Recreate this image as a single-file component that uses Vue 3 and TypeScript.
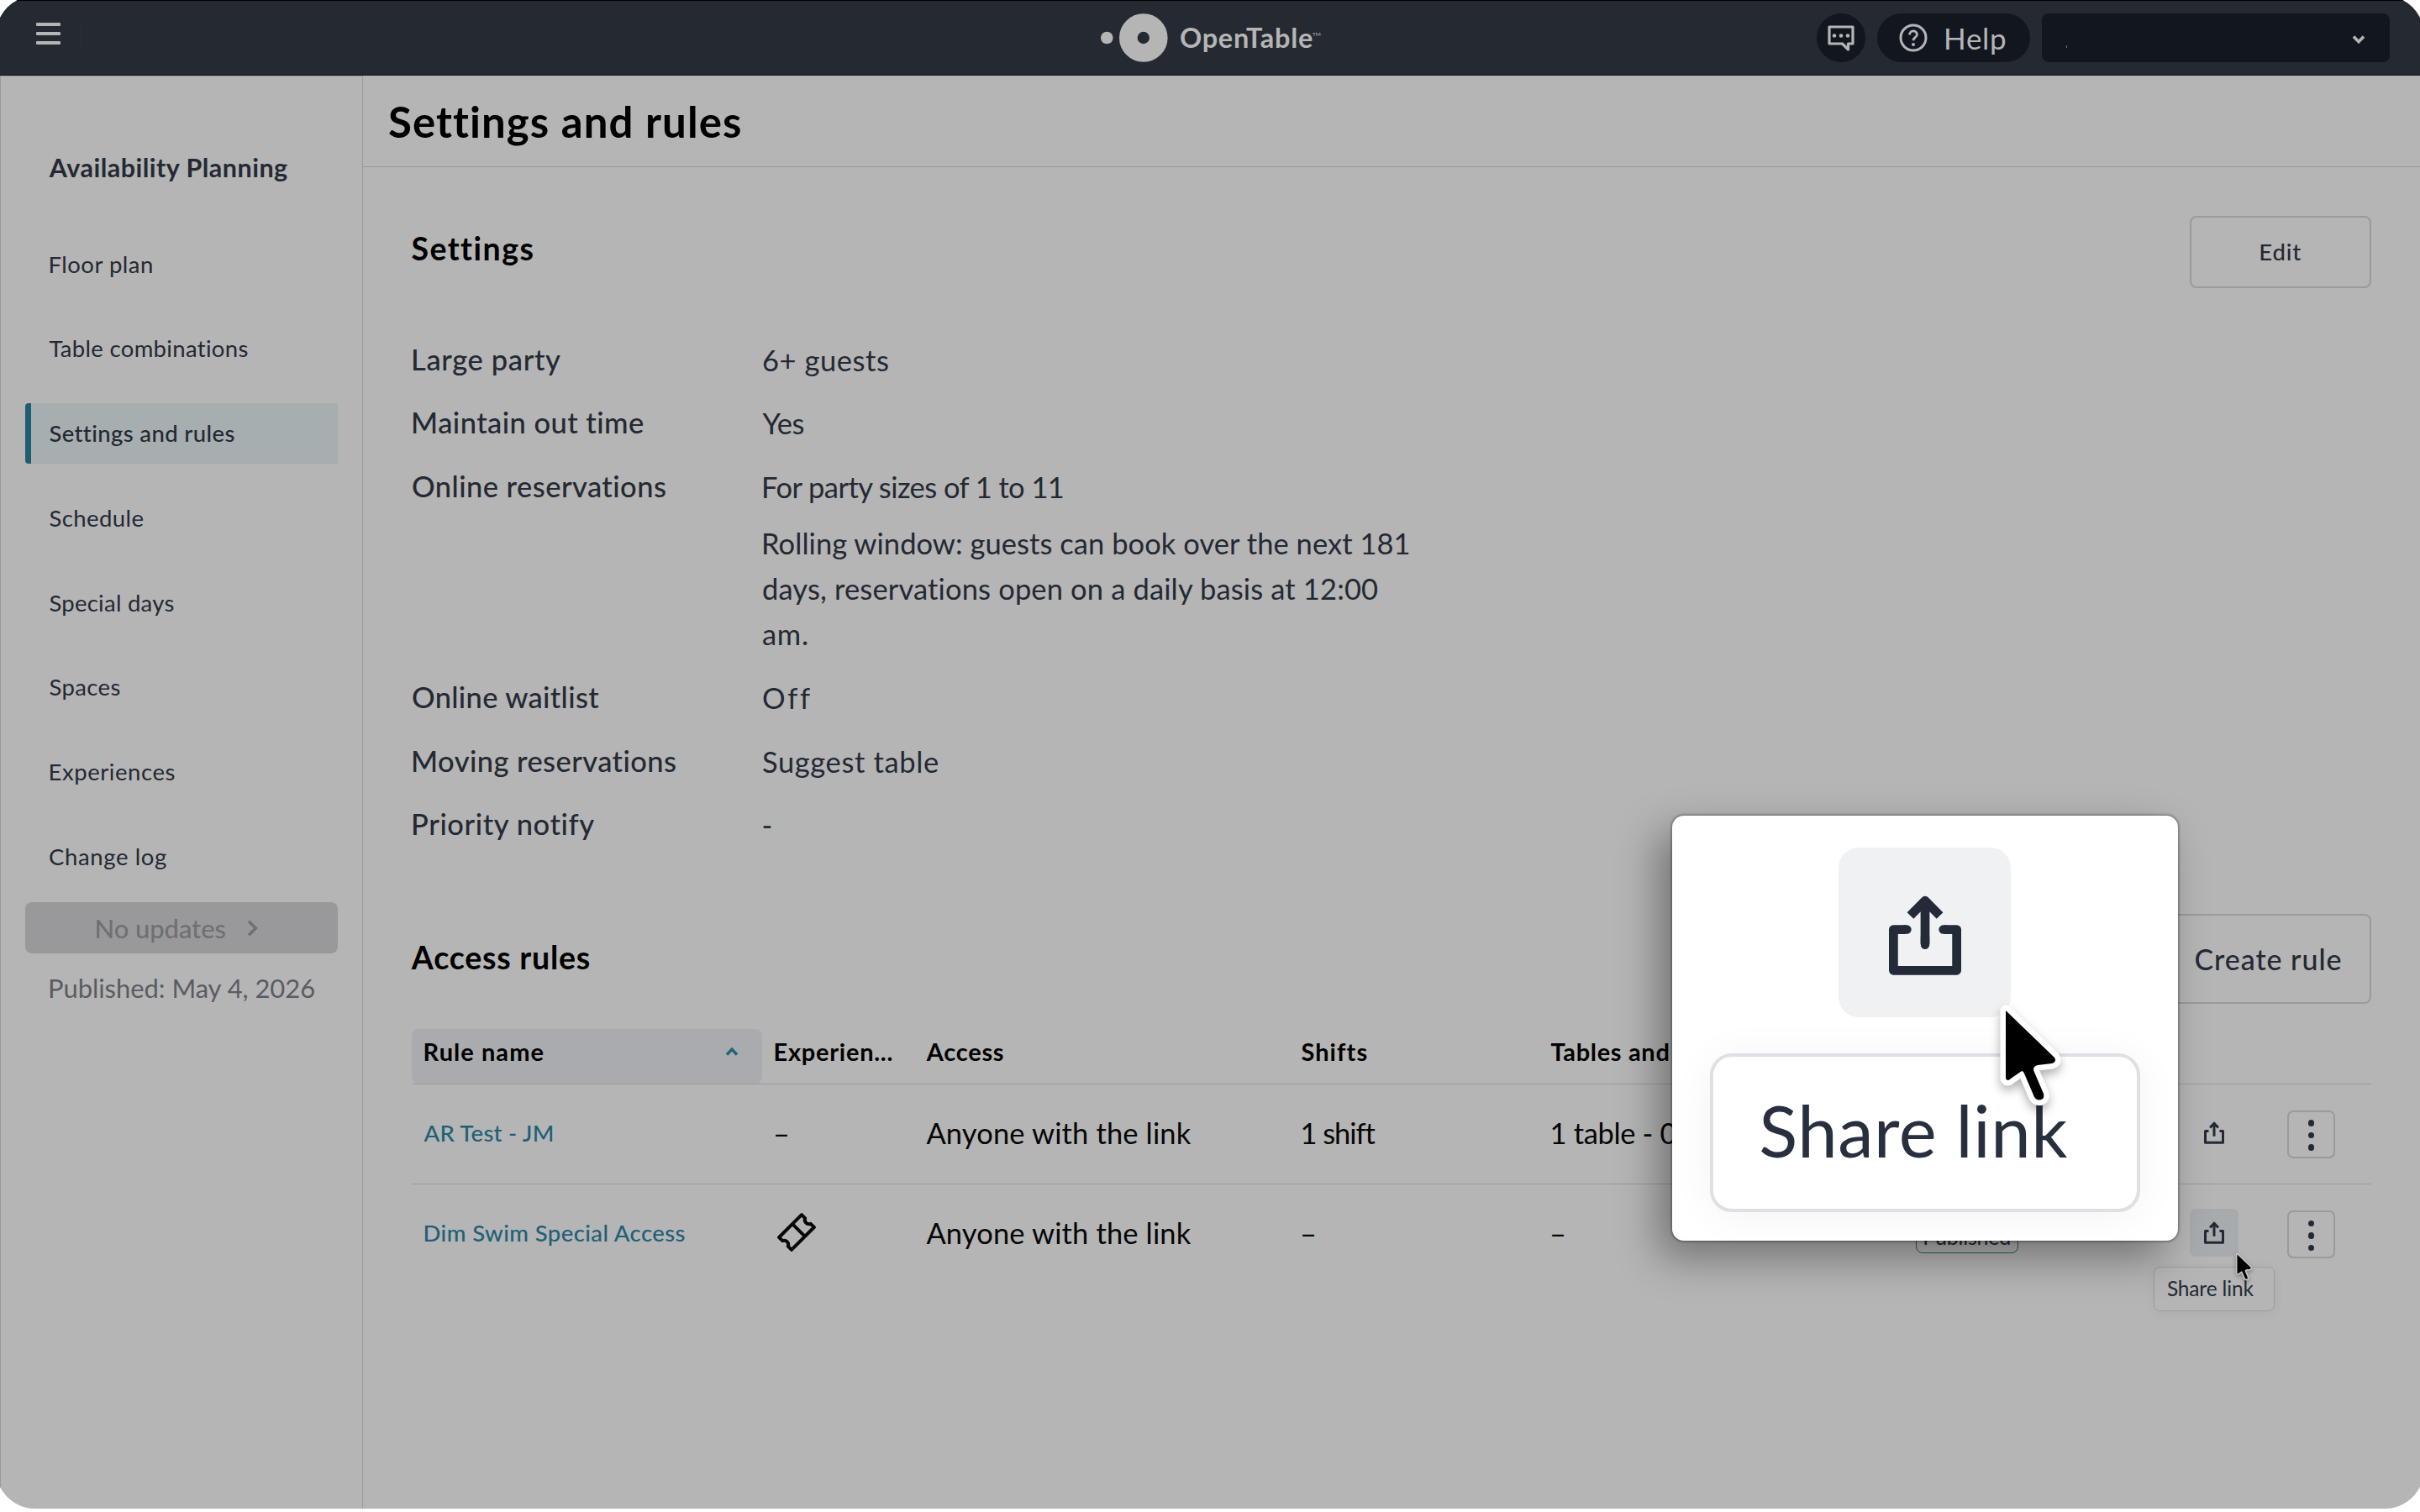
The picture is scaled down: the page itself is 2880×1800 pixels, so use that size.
<script setup lang="ts">
import type { Directive } from 'vue'

/* Tracks a label out to a given ink width and trims most of its side bearings. */
const ctx = document.createElement('canvas').getContext('2d') as CanvasRenderingContext2D
const vInk: Directive<HTMLElement, number> = {
  mounted(el, { value }) {
    const cs = getComputedStyle(el)
    const text = (el.textContent ?? '').trim()
    ctx.font = `${cs.fontWeight} ${cs.fontSize} ${cs.fontFamily}`
    ctx.letterSpacing = '0.001px'
    const m = ctx.measureText(text)
    const ink = m.actualBoundingBoxLeft + m.actualBoundingBoxRight
    const track = text.length > 1 ? (value - ink) / (text.length - 1) : 0
    el.style.letterSpacing = `${track}px`
    el.style.marginLeft = `${m.actualBoundingBoxLeft * 0.45 - 0.6}px`
    el.style.marginRight = `${-(m.width - m.actualBoundingBoxRight) - track}px`
  },
}

const nav = [
  { label: 'Floor plan', w: 122 },
  { label: 'Table combinations', w: 236 },
  { label: 'Settings and rules', w: 220, active: true },
  { label: 'Schedule', w: 112 },
  { label: 'Special days', w: 148 },
  { label: 'Spaces', w: 84 },
  { label: 'Experiences', w: 148 },
  { label: 'Change log', w: 139 },
]

const settings = [
  { label: 'Large party', w: 175, values: [[{ t: '6+ guests', w: 149 }]] },
  { label: 'Maintain out time', w: 274, values: [[{ t: 'Yes', w: 49 }]] },
  {
    label: 'Online reservations',
    w: 301,
    values: [
      [{ t: 'For party sizes of 1 to 11', w: 358 }],
      [
        { t: 'Rolling window: guests can book over the next 181', w: 769 },
        { t: 'days, reservations open on a daily basis at 12:00', w: 732 },
        { t: 'am.', w: 53 },
      ],
    ],
  },
  { label: 'Online waitlist', w: 223, values: [[{ t: 'Off', w: 56 }]] },
  { label: 'Moving reservations', w: 312, values: [[{ t: 'Suggest table', w: 208 }]] },
  { label: 'Priority notify', w: 216, values: [[{ t: '-', w: 10 }]] },
]

const rules = [
  { name: 'AR Test - JM', w: 155, ticket: false, shifts: '1 shift', sw: 88, tables: '1 table - 0', tw: 148, published: false, hover: false },
  { name: 'Dim Swim Special Access', w: 310, ticket: true, shifts: '–', sw: 15, tables: '–', tw: 15, published: true, hover: true },
]
</script>

<template>
  <div class="stage">
    <div class="window">
      <header class="topbar">
        <div class="menu"><i></i><i></i><i></i></div>
        <div class="brand">
          <svg width="80" height="58" viewBox="0 0 80 58">
            <circle cx="7.3" cy="29" r="7.3" fill="#b5b5b5" />
            <circle cx="50.8" cy="29" r="18" fill="none" stroke="#b5b5b5" stroke-width="21.6" />
          </svg>
          <span class="wordmark"><span v-ink="157">OpenTable</span></span>
          <span class="tm">TM</span>
        </div>
        <div class="tools">
          <div class="chat">
            <svg width="34" height="34" viewBox="0 0 34 34">
              <path d="M3 3H31V23H25.5V30L18.5 23H3Z" fill="none" stroke="#b5b5b5" stroke-width="3.2" stroke-linejoin="round" />
              <g fill="#b5b5b5"><circle cx="9" cy="13.5" r="2.3" /><circle cx="17" cy="13.5" r="2.3" /><circle cx="25" cy="13.5" r="2.3" /></g>
            </svg>
          </div>
          <div class="help">
            <svg width="34" height="34" viewBox="0 0 34 34">
              <circle cx="17" cy="17" r="15" fill="none" stroke="#b5b5b5" stroke-width="3" />
              <path d="M12.6 13.6C12.6 7.4 21.4 7.6 21.4 13.2C21.4 16.4 17 16.4 17 20.2" fill="none" stroke="#b5b5b5" stroke-width="2.8" />
              <circle cx="17" cy="25" r="2" fill="#b5b5b5" />
            </svg>
            <span v-ink="71">Help</span>
          </div>
          <div class="account">
            <i class="tick"></i>
            <svg width="16" height="12" viewBox="0 0 16 12"><path d="M2 2.5L8 8.7L14 2.5" fill="none" stroke="#b5b5b5" stroke-width="3.6" /></svg>
          </div>
        </div>
      </header>

      <div class="body">
        <aside class="sidebar">
          <h3><span v-ink="285">Availability Planning</span></h3>
          <nav>
            <a v-for="n in nav" :key="n.label" :class="{ active: n.active }"><span v-ink="n.w">{{ n.label }}</span></a>
          </nav>
          <div class="updates">
            <span v-ink="154">No updates</span>
            <svg width="14" height="20" viewBox="0 0 14 20"><path d="M2 1.8L10.5 10L2 18.2" fill="none" stroke="#6e7074" stroke-width="3.4" /></svg>
          </div>
          <p class="published-on"><span v-ink="316">Published: May 4, 2026</span></p>
        </aside>

        <main>
          <div class="page-head"><h1><span v-ink="418">Settings and rules</span></h1></div>
          <div class="content">
            <div class="section-head first">
              <h2><span v-ink="145">Settings</span></h2>
              <div class="btn edit"><span v-ink="48">Edit</span></div>
            </div>
            <dl>
              <div v-for="s in settings" :key="s.label" class="setting">
                <dt><span v-ink="s.w">{{ s.label }}</span></dt>
                <dd>
                  <p v-for="(v, i) in s.values" :key="i">
                    <span v-for="l in v" :key="l.t" class="line"><span v-ink="l.w">{{ l.t }}</span></span>
                  </p>
                </dd>
              </div>
            </dl>

            <div class="section-head second">
              <h2><span v-ink="213">Access rules</span></h2>
              <div class="btn create"><span v-ink="173">Create rule</span></div>
            </div>

            <div class="table">
              <div class="row head">
                <div class="cell sorted">
                  <span v-ink="141">Rule name</span>
                  <svg width="16" height="12" viewBox="0 0 16 12"><path d="M2 9.5L8 3.3L14 9.5" fill="none" stroke="#1f6479" stroke-width="3.4" /></svg>
                </div>
                <div class="cell"><span v-ink="139">Experien...</span></div>
                <div class="cell"><span v-ink="92">Access</span></div>
                <div class="cell"><span v-ink="78">Shifts</span></div>
                <div class="cell"><span v-ink="140">Tables and</span></div>
              </div>
              <div v-for="r in rules" :key="r.name" class="row">
                <div class="cell link"><span v-ink="r.w">{{ r.name }}</span></div>
                <div class="cell">
                  <svg v-if="r.ticket" class="ticket" width="46" height="46" viewBox="0 0 46 46">
                    <g transform="rotate(-45 23 23)" fill="none" stroke="#060708" stroke-width="4" stroke-linejoin="round">
                      <path d="M4 12.5H42V18.4A5 5 0 0 0 42 27.6V33.5H4V27.6A5 5 0 0 0 4 18.4Z" />
                      <path d="M26.5 12.5V33.5" />
                    </g>
                  </svg>
                  <span v-else v-ink="15">–</span>
                </div>
                <div class="cell"><span v-ink="316">Anyone with the link</span></div>
                <div class="cell"><span v-ink="r.sw">{{ r.shifts }}</span></div>
                <div class="cell"><span v-ink="r.tw">{{ r.tables }}</span></div>
                <div class="cell"><div v-if="r.published" class="badge"><span v-ink="102">Published</span></div></div>
                <div class="share" :class="{ hover: r.hover }">
                  <svg width="24" height="27" viewBox="0 0 24 27" fill="none" stroke="#232a35" stroke-width="3" stroke-linejoin="round">
                    <path d="M5.5 11.5H1.5V25.3H22.5V11.5H18.5" />
                    <path d="M12 2.2V17.8M7.1 7.6L12 2.2L16.9 7.6" />
                  </svg>
                  <template v-if="r.hover">
                    <div class="tip"><span v-ink="103.5">Share link</span></div>
                    <svg class="cursor" viewBox="-8 -8 80 130">
                      <path d="M1 1V82Q3 86 7 82L20 73Q22 73 23 76L35 104Q39 110 45 106Q47 104 46 100L34 72Q34 67 39 66L56 64Q62 62 59 57Z" />
                    </svg>
                  </template>
                </div>
                <div class="kebab"><i></i><i></i><i></i></div>
              </div>
            </div>
          </div>
        </main>
      </div>

      <div class="zoom">
        <div class="zoom-tile">
          <svg width="86" height="96.75" viewBox="0 0 24 27" fill="none" stroke="#232b39" stroke-width="3" stroke-linejoin="round">
            <path d="M5.6 11.6H1.5V25.2H22.5V11.6H18.4" />
            <path d="M6 11.6H5.2M18 11.6H18.8M12 14V16.7" stroke-linecap="round" stroke-width="2.9" />
            <path d="M12 2V16.4M7.1 7L12 2L16.9 7" />
          </svg>
        </div>
        <div class="zoom-tip"><span v-ink="365">Share link</span></div>
        <svg class="zoom-cursor" viewBox="-8 -8 80 130">
          <path d="M1 1V82Q3 86 7 82L20 73Q22 73 23 76L35 104Q39 110 45 106Q47 104 46 100L34 72Q34 67 39 66L56 64Q62 62 59 57Z" />
        </svg>
      </div>
    </div>
  </div>
</template>

<style>
body { background: #fff; }
</style>

<style scoped>
* { box-sizing: border-box; margin: 0; padding: 0; }
.stage { width: 2880px; height: 1800px; overflow: hidden; background: #fff; font-family: Lato, "Open Sans", sans-serif; color: #242933; white-space: nowrap; }
.window { position: relative; width: 2880px; height: 1800px; background: #b5b5b5; clip-path: inset(-5px -5px 4px -5px round 47px); display: flex; flex-direction: column; }
svg { display: block; flex: none; }
span { display: inline-block; }

.topbar { height: 90px; flex: none; background: #252932; border-top: 1px solid #000; border-bottom: 1px solid #12141f; display: flex; justify-content: space-between; padding: 15px 36px 0 43px; }
.menu { flex: none; width: 54px; height: 29px; margin: 11px 1213px 0 0; padding: 0 24px 3px 0; border-right: 1px solid #2a2f39; display: flex; flex-direction: column; justify-content: space-between; }
.menu i { height: 4px; background: #b5b5b5; border-radius: 1px; flex: none; }
.brand { display: flex; align-items: center; height: 58px; flex: none; width: 300px; }
.wordmark { font-size: 32.5px; font-weight: 700; color: #b5b5b5; margin-left: 15px; line-height: 40px; }
.tm { font-size: 6.5px; color: #b5b5b5; align-self: flex-start; line-height: 8px; margin: 21px 0 0 0; }
.tools { display: flex; gap: 14px; height: 58px; margin-left: auto; }
.chat { width: 58px; height: 58px; border-radius: 50%; background: #11161f; display: flex; justify-content: center; padding-top: 13px; }
.help { width: 182px; border-radius: 29px; background: #11161f; display: flex; align-items: center; padding-left: 26px; font-size: 35px; line-height: 58px; color: #b5b5b5; gap: 21px; }
.account { width: 414px; border-radius: 8px; background: #11161f; display: flex; align-items: center; justify-content: space-between; padding: 4px 29px 0; }
.tick { width: 1px; height: 3px; background: #777; margin-top: 17px; }

.body { flex: 1; display: flex; }
.sidebar { width: 432px; flex: none; border: 1px solid #9b9b9c; border-bottom: 0; padding: 88px 30px 0 29px; }
.sidebar h3 { font-size: 30.5px; font-weight: 700; line-height: 40px; padding-left: 29px; margin-bottom: 59.6px; }
nav { display: flex; flex-direction: column; gap: 28.75px; }
nav a { height: 72px; line-height: 72.5px; padding-left: 29px; font-size: 27.5px; width: 372px; display: block; }
nav a.active { background: #a6aeb0; border-left: 7px solid #1f5e72; padding-left: 22px; font-weight: 500; border-radius: 4px 0 0 4px; }
.updates { width: 372px; height: 61px; margin-top: 18.2px; border-radius: 8px; background: #99999b; color: #6e7074; font-size: 31px; font-weight: 500; line-height: 58px; display: flex; align-items: center; padding-left: 84px; }
.updates svg { margin-left: 25px; }
.updates span { flex: none; }
.published-on { margin-top: 21px; padding-left: 28.5px; font-size: 31px; line-height: 40px; color: #5a5c62; }

main { flex: 1; }
.page-head { height: 109px; border-bottom: 1px solid #9b9b9c; padding-left: 31px; }
h1 { font-size: 51px; font-weight: 700; line-height: 109px; color: #000; }
.content { padding: 58px 58px 0; }
.section-head { display: flex; justify-content: space-between; align-items: center; }
.section-head.first { height: 86px; }
.section-head.second { height: 107px; margin-top: 78.5px; }
h2 { font-size: 37.5px; font-weight: 700; color: #000; line-height: 46px; }
.first h2 { padding-bottom: 8px; }
.second h2 { padding-bottom: 2px; }
.btn { border: 2px solid #9a9a9b; border-radius: 8px; display: flex; align-items: center; justify-content: center; font-weight: 500; }
.edit { width: 216px; height: 86px; font-size: 27.5px; padding-bottom: 1px; }
.create { width: 246px; height: 107px; font-size: 34px; }

dl { margin-top: 58.6px; display: flex; flex-direction: column; gap: 21.6px; }
.setting { display: grid; grid-template-columns: 417px 1fr; font-size: 34.5px; line-height: 54px; padding-left: 1px; }
dt { font-weight: 500; margin-top: -1px; height: 54px; }
dd { display: flex; flex-direction: column; gap: 13.6px; }
.line { display: block; }

.table { margin-top: 30px; }
.row { display: grid; grid-template-columns: 417px 181px 446px 297px 434px 341px 116px 100px; align-items: center; height: 119px; border-bottom: 1px solid #9b9b9c; color: #050607; font-size: 34.5px; line-height: 44px; }
.row:last-child { border-bottom: 0; }
.row.head { height: 66px; font-size: 29px; font-weight: 700; color: #000; align-items: stretch; }
.cell { padding-left: 15px; display: flex; align-items: center; padding-bottom: 2px; }
.head .cell { padding-bottom: 10px; }
.sorted { background: #a9abae; border-radius: 8px; justify-content: space-between; padding-right: 28px; }
.link { color: #1f6077; font-size: 27.5px; font-weight: 500; }
.ticket { margin: -3px 0 0 3px; }
.badge { height: 40px; width: 122px; border: 1.5px solid #24663d; border-radius: 8px; display: flex; justify-content: center; align-items: center; font-size: 25px; line-height: 30px; color: #242933; margin-top: 7px; }
.share { position: relative; width: 58px; height: 57px; border-radius: 7px; display: flex; justify-content: center; padding-top: 15.5px; margin-top: -4px; }
.share.hover { background: #a8abae; }
.kebab { width: 57px; height: 57px; border: 2px solid #9a9a9b; border-radius: 7px; display: flex; flex-direction: column; gap: 7.1px; align-items: center; padding-top: 9.5px; margin-top: 1px; }
.kebab i { width: 7.4px; height: 7.4px; border-radius: 50%; background: #242933; flex: none; }
.tip { position: absolute; left: -43px; top: 69px; width: 144px; height: 53px; border: 1.5px solid #9c9c9d; border-radius: 7px; background: #b5b5b5; font-size: 24.5px; line-height: 50px; color: #242933; padding-left: 15.5px; box-shadow: 0 2px 14px rgba(0, 0, 0, .05); }
.cursor { position: absolute; left: 53.5px; top: 52.5px; width: 22px; height: 35.75px; overflow: visible; filter: drop-shadow(0 2px 2px rgba(0, 0, 0, .3)); }
.cursor path { stroke: #c4c4c4; stroke-width: 12px; stroke-linejoin: round; paint-order: stroke; fill: #000; }

.zoom { position: absolute; left: 1990px; top: 971px; width: 601.5px; height: 505.5px; background: #fff; border-radius: 14px; box-shadow: 0 0 3px .5px rgba(0, 0, 0, .4), -16px 20px 50px rgba(0, 0, 0, .37); display: flex; flex-direction: column; align-items: center; padding-top: 38px; }
.zoom-tile { width: 205px; height: 202px; border-radius: 24px; background: #f0f1f3; display: flex; justify-content: center; padding-top: 55.5px; }
.zoom-tip { width: 512px; height: 189px; margin-top: 43px; border: 4px solid #dfe0e3; border-radius: 26px; padding-left: 56px; font-size: 85px; line-height: 175px; color: #283040; box-shadow: 0 4px 50px rgba(0, 0, 0, .05); background: #fff; }
.zoom-cursor { position: absolute; left: 387.5px; top: 223px; width: 80px; height: 130px; overflow: visible; filter: drop-shadow(0 6px 6px rgba(0, 0, 0, .3)); }
.zoom-cursor path { stroke: #fff; stroke-width: 13px; stroke-linejoin: round; paint-order: stroke; fill: #000; }
</style>
